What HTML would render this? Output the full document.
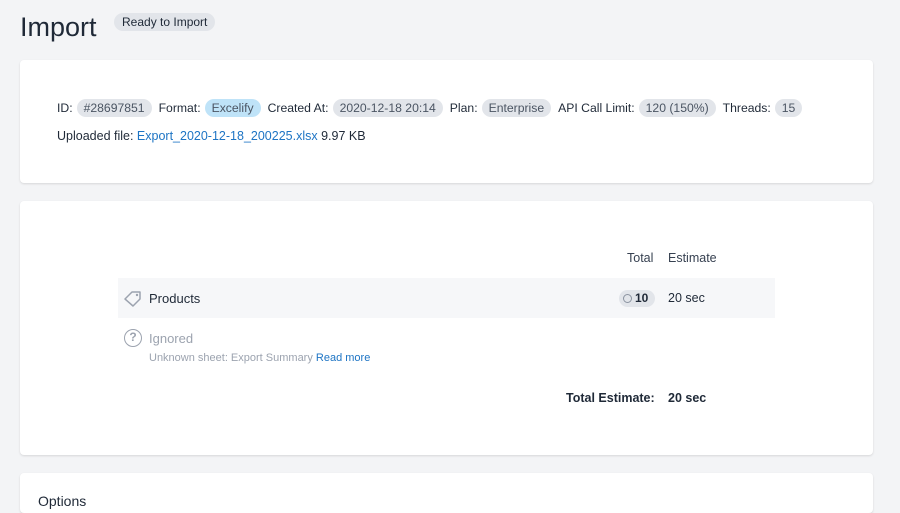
<!DOCTYPE html>
<html><head><meta charset="utf-8"><style>
*{box-sizing:border-box;margin:0;padding:0}
body{width:900px;height:500px;overflow:hidden;background:#f3f4f6;font-family:"Liberation Sans",sans-serif;color:#1f2937;font-size:12.5px;position:relative}
.a{position:absolute;white-space:nowrap}
.card{position:absolute;left:20px;width:853px;background:#fff;border-radius:4px;box-shadow:0 1px 2px rgba(0,0,0,.12)}
.chip{display:inline-block;background:#e2e5ea;color:#4b5563;border-radius:9px;padding:0 7px;height:18px;line-height:18px;margin:0 7px 0 4px;font-size:12.5px}
.blue{background:#bfe3f8}
a{color:#1d74c4;text-decoration:none}
</style></head><body>
<div class="a" style="left:20px;top:12px;font-size:27px;color:#1f2937">Import</div>
<div class="a" style="left:114px;top:13px;height:18px;line-height:18px;padding:0 8px;background:#e2e5ea;border-radius:9px;font-size:12px">Ready to Import</div>

<div class="card" style="top:60px;height:123px">
 <div class="a" style="left:37px;top:39px;line-height:18px;font-size:12.2px">ID:<span class="chip" style="font-size:12.2px">#28697851</span>Format:<span class="chip blue" style="font-size:12.2px">Excelify</span>Created At:<span class="chip" style="font-size:12.2px">2020-12-18 20:14</span>Plan:<span class="chip" style="font-size:12.2px">Enterprise</span>API Call Limit:<span class="chip" style="font-size:12.2px">120 (150%)</span>Threads:<span class="chip" style="font-size:12.2px">15</span></div>
 <div class="a" style="left:37px;top:69px">Uploaded file: <a>Export_2020-12-18_200225.xlsx</a> 9.97 KB</div>
</div>

<div class="card" style="top:201px;height:254px">
 <div class="a" style="left:607px;top:50px;color:#374151">Total</div>
 <div class="a" style="left:648px;top:50px;color:#374151">Estimate</div>
 <div class="a" style="left:98px;top:77px;width:657px;height:40px;background:#f6f7f9"></div>
 <svg class="a" style="left:103px;top:88px" width="20" height="18" viewBox="0 0 20 18"><path d="M2 10 L9 3 L17 3 L17 10 L10 17 Z" fill="none" stroke="#9ca3af" stroke-width="1.5" stroke-linejoin="round"/><circle cx="14" cy="6" r="1.2" fill="#9ca3af"/></svg>
 <div class="a" style="left:129px;top:90px;font-size:13px">Products</div>
 <div class="a" style="left:599px;top:89px;height:17px;width:36px;background:#e2e5ea;border-radius:9px"></div>
 <div class="a" style="left:603px;top:93px;width:9px;height:9px;border:1.5px solid #8b93a0;border-radius:50%"></div>
 <div class="a" style="left:615px;top:90px;font-weight:bold;font-size:12px">10</div>
 <div class="a" style="left:648px;top:90px">20 sec</div>
 <div class="a" style="left:104px;top:128px;width:18px;height:18px;border:1.5px solid #9ca3af;border-radius:50%;text-align:center;line-height:15px;color:#9ca3af;font-weight:bold;font-size:12px">?</div>
 <div class="a" style="left:129px;top:130px;color:#9ca3af;font-size:13px">Ignored</div>
 <div class="a" style="left:129px;top:151px;color:#9ca3af;font-size:11px">Unknown sheet: Export Summary <a>Read more</a></div>
 <div class="a" style="left:546px;top:190px;font-weight:bold">Total Estimate:</div>
 <div class="a" style="left:648px;top:190px;font-weight:bold">20 sec</div>
</div>

<div class="card" style="top:473px;height:40px">
 <div class="a" style="left:18px;top:20px;font-size:14px">Options</div>
</div>
</body></html>
